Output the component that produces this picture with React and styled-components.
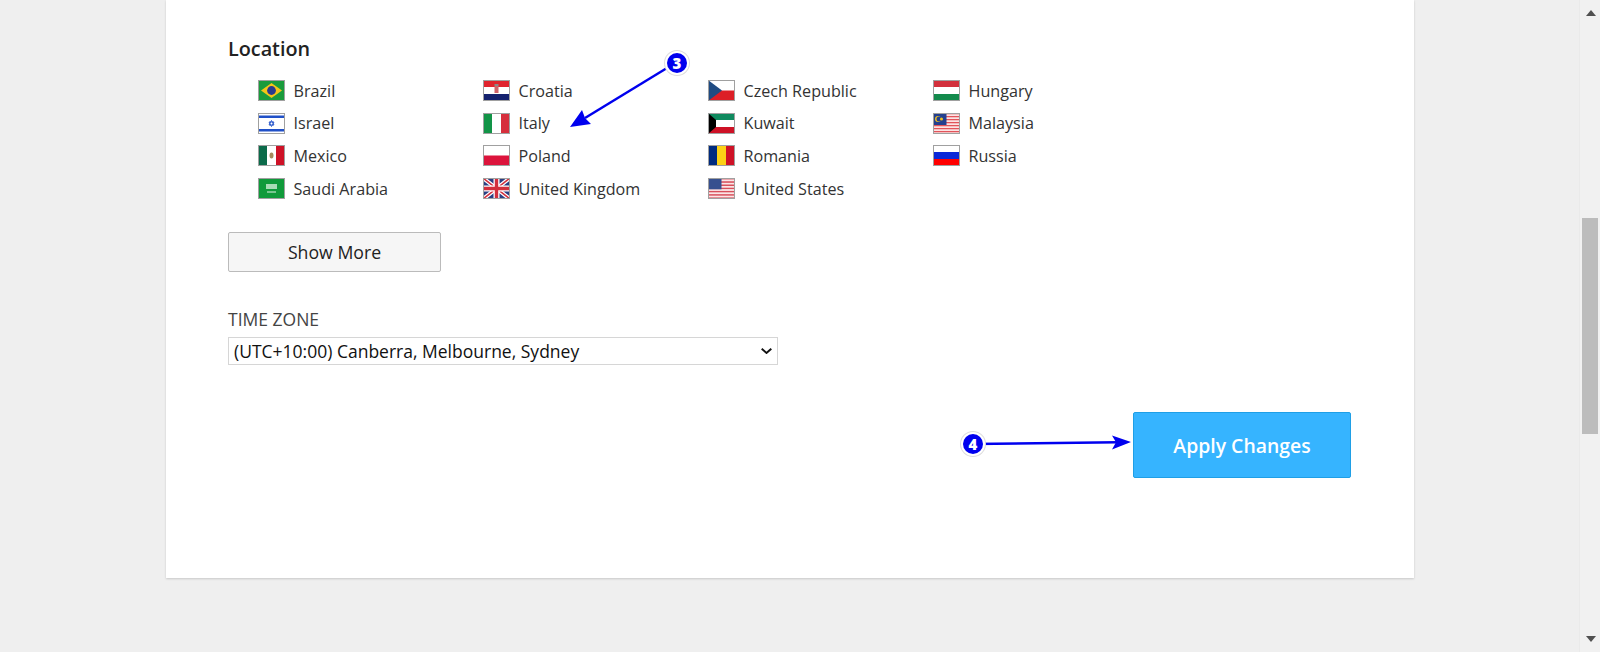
import React from 'react';
import styled, { createGlobalStyle } from 'styled-components';

const Global = createGlobalStyle`
  html, body { margin: 0; padding: 0; height: 100%; overflow: hidden; background: #efefef; }
  body { font-family: "Open Sans", "Liberation Sans", sans-serif; }
`;

const Page = styled.div`
  position: relative;
  display: flex;
  width: 1600px;
  height: 652px;
  overflow: hidden;
  background: #efefef;
`;
const Main = styled.main`
  flex: 1;
  padding-left: 166px;
`;
const Card = styled.section`
  box-sizing: border-box;
  width: 1248px;
  height: 578px;
  padding: 35px 63px 0 62px;
  background: #fff;
  box-shadow: 0 1px 2px rgba(0, 0, 0, 0.16);
`;
const Heading = styled.h2`
  margin: 0;
  font-size: 19.8px;
  line-height: 27px;
  font-weight: 600;
  color: #222;
`;
const FlagGrid = styled.ul`
  display: grid;
  grid-template-columns: repeat(4, 225px);
  grid-auto-rows: 32.6px;
  margin: 12.5px 0 0;
  padding: 0 0 0 30px;
  list-style: none;
`;
const FlagItem = styled.li`
  display: flex;
  align-items: center;
  gap: 8.5px;
  font-size: 16.15px;
  line-height: 22px;
  color: #333;
`;
const FlagSvg = styled.svg`
  flex: none;
  width: 27px;
  height: 21px;
  display: block;
`;
const ShowMore = styled.button`
  display: block;
  box-sizing: border-box;
  width: 213px;
  height: 40px;
  margin-top: 27.5px;
  border: 1px solid #bbb;
  border-radius: 2px;
  background: #f6f6f6;
  font: 400 17.7px "Open Sans", sans-serif;
  color: #222;
`;
const FieldLabel = styled.label`
  display: block;
  margin-top: 35px;
  font-size: 17.5px;
  line-height: 24px;
  color: #444;
`;
const ZoneSelect = styled.select`
  display: block;
  box-sizing: border-box;
  width: 550px;
  height: 28px;
  margin-top: 6px;
  padding: 0 0 0 5px;
  border: 1px solid #d6d6d6;
  border-radius: 0;
  appearance: none;
  background: #fff url("data:image/svg+xml,%3Csvg xmlns='http://www.w3.org/2000/svg' width='11' height='6'%3E%3Cpath d='M.7.7 5.5 5 10.3.7' fill='none' stroke='%23111' stroke-width='1.9'/%3E%3C/svg%3E") no-repeat 532px 10px;
  font: 400 17.5px "Open Sans", sans-serif;
  color: #111;
`;
const ActionRow = styled.div`
  display: flex;
  justify-content: flex-end;
  margin-top: 47px;
`;
const ApplyButton = styled.button`
  box-sizing: border-box;
  width: 218px;
  height: 66px;
  border: 1px solid #1f9fe6;
  border-radius: 2px;
  background: #36b4ff;
  font: 600 19.4px "Open Sans", sans-serif;
  color: #fff;
`;
const Scrollbar = styled.aside`
  position: absolute;
  top: 0;
  right: 0;
  bottom: 0;
  width: 21px;
  box-sizing: border-box;
  padding: 218px 2px 0;
  background: #f1f1f1;
  border-left: 1px solid #eaeaea;
`;
const Thumb = styled.div`
  height: 216px;
  background: #bcbcbc;
`;
const ScrollArrow = styled.svg`
  position: absolute;
  right: 4px;
  width: 10px;
  height: 6px;
  ${p => (p.$up ? 'top: 10px;' : 'bottom: 10px;')}
`;
const Overlay = styled.svg`
  position: absolute;
  inset: 0;
  width: 1600px;
  height: 652px;
  pointer-events: none;
`;
const Badge = styled.span`
  position: absolute;
  left: ${p => p.$x - 10}px;
  top: ${p => p.$y - 10}px;
  box-sizing: border-box;
  width: 20px;
  height: 20px;
  display: flex;
  align-items: center;
  justify-content: center;
  border-radius: 50%;
  background: #0000ee;
  box-shadow: 0 0 0 2px #fff, 0 0 0 3px #ddd;
  font: 800 15px "Open Sans", sans-serif;
  color: #fff;
`;

const stripes = (n, a, b) =>
  Array.from({ length: n }, (_, i) => (
    <rect key={i} x="0" y={(i * 21) / n} width="27" height={21 / n + 0.1} fill={i % 2 ? b : a} />
  ));

const art = {
  br: <><rect width="27" height="21" fill="#1a9b3c" /><path d="M13.5 3 24 10.5 13.5 18 3 10.5Z" fill="#f5c518" /><circle cx="13.5" cy="10.5" r="4.4" fill="#2b3a8c" /></>,
  hr: <><rect width="27" height="7" fill="#e0232e" /><rect y="7" width="27" height="7" fill="#fff" /><rect y="14" width="27" height="7" fill="#14216e" /><rect x="11.5" y="6" width="4" height="7" fill="#d0626a" /><rect x="11.5" y="4" width="4" height="2" fill="#8a8a8a" /></>,
  cz: <><rect width="27" height="10.5" fill="#fff" /><rect y="10.5" width="27" height="10.5" fill="#dc1e26" /><path d="M0 0 14 10.5 0 21Z" fill="#1f4b82" /></>,
  hu: <><rect width="27" height="7" fill="#d2303c" /><rect y="7" width="27" height="7" fill="#fff" /><rect y="14" width="27" height="7" fill="#138a4c" /></>,
  il: <><rect width="27" height="21" fill="#fff" /><rect y="2.5" width="27" height="2.5" fill="#2050c8" /><rect y="16" width="27" height="2.5" fill="#2050c8" /><path d="M13.5 7.5 16 12H11ZM13.5 13.5 11 9h5Z" fill="none" stroke="#2050c8" strokeWidth="0.9" /></>,
  it: <><rect width="9" height="21" fill="#129447" /><rect x="9" width="9" height="21" fill="#fff" /><rect x="18" width="9" height="21" fill="#d62f3c" /></>,
  kw: <><rect width="27" height="7" fill="#0f8a5f" /><rect y="7" width="27" height="7" fill="#fff" /><rect y="14" width="27" height="7" fill="#ce1126" /><path d="M0 0 8 7V14L0 21Z" fill="#000" /></>,
  my: <>{stripes(14, '#e2545a', '#fbe3e3')}<rect width="13.5" height="12" fill="#23408f" /><circle cx="5" cy="6" r="3" fill="#f0c020" /><circle cx="6" cy="6" r="2.5" fill="#23408f" /><circle cx="8.5" cy="6" r="1.5" fill="#f0c020" /></>,
  mx: <><rect width="9" height="21" fill="#0b6b4a" /><rect x="9" width="9" height="21" fill="#fff" /><rect x="18" width="9" height="21" fill="#ce1126" /><ellipse cx="13.5" cy="10.5" rx="2" ry="3" fill="#a58a5c" /></>,
  pl: <><rect width="27" height="10.5" fill="#fff" /><rect y="10.5" width="27" height="10.5" fill="#dc143c" /></>,
  ro: <><rect width="9" height="21" fill="#002b7f" /><rect x="9" width="9" height="21" fill="#fcd116" /><rect x="18" width="9" height="21" fill="#ce1126" /></>,
  ru: <><rect width="27" height="7" fill="#fff" /><rect y="7" width="27" height="7" fill="#0a28d8" /><rect y="14" width="27" height="7" fill="#f00" /></>,
  sa: <><rect width="27" height="21" fill="#109a3a" /><rect x="8" y="6" width="11" height="5" fill="#a9dcb5" /><rect x="9" y="13.5" width="9" height="1" fill="#dff2e3" /></>,
  gb: <><rect width="27" height="21" fill="#2a3f83" /><path d="M0 0 27 21M27 0 0 21" stroke="#fff" strokeWidth="4" /><path d="M0 0 27 21M27 0 0 21" stroke="#d22f3c" strokeWidth="1.5" /><path d="M13.5 0V21M0 10.5H27" stroke="#fff" strokeWidth="6" /><path d="M13.5 0V21M0 10.5H27" stroke="#d22f3c" strokeWidth="3.4" /></>,
  us: <>{stripes(13, '#d8505c', '#fbe6e6')}<rect width="13.5" height="11.3" fill="#37508f" /></>,
};

const Flag = ({ code }) => (
  <FlagSvg viewBox="0 0 27 21" aria-hidden="true">
    {art[code]}
    <rect x="0.5" y="0.5" width="26" height="20" fill="none" stroke="#a0a0a0" />
  </FlagSvg>
);

const locations = [
  ['br', 'Brazil'], ['hr', 'Croatia'], ['cz', 'Czech Republic'], ['hu', 'Hungary'],
  ['il', 'Israel'], ['it', 'Italy'], ['kw', 'Kuwait'], ['my', 'Malaysia'],
  ['mx', 'Mexico'], ['pl', 'Poland'], ['ro', 'Romania'], ['ru', 'Russia'],
  ['sa', 'Saudi Arabia'], ['gb', 'United Kingdom'], ['us', 'United States'],
];

export default function App() {
  return (
    <Page>
      <Global />
      <Main>
        <Card>
          <Heading>Location</Heading>
          <FlagGrid>
            {locations.map(([code, name]) => (
              <FlagItem key={code}><Flag code={code} />{name}</FlagItem>
            ))}
          </FlagGrid>
          <ShowMore type="button">Show More</ShowMore>
          <FieldLabel htmlFor="tz">TIME ZONE</FieldLabel>
          <ZoneSelect id="tz" defaultValue="syd">
            <option value="syd">(UTC+10:00) Canberra, Melbourne, Sydney</option>
          </ZoneSelect>
          <ActionRow>
            <ApplyButton type="button">Apply Changes</ApplyButton>
          </ActionRow>
        </Card>
      </Main>
      <Scrollbar>
        <ScrollArrow $up viewBox="0 0 10 6"><path d="M5 0 10 6H0Z" fill="#505050" /></ScrollArrow>
        <Thumb />
        <ScrollArrow viewBox="0 0 10 6"><path d="M0 0H10L5 6Z" fill="#505050" /></ScrollArrow>
      </Scrollbar>
      <Overlay viewBox="0 0 1600 652">
        <path d="M667 68 585 118" stroke="#0000ee" strokeWidth="2.5" fill="none" />
        <path d="M570 127 582 110 585 118 591 124Z" fill="#0000ee" />
        <path d="M973 444 1118 442.3" stroke="#0000ee" strokeWidth="2.5" fill="none" />
        <path d="M1131 442 1112 435.5 1116 442.3 1112 449.5Z" fill="#0000ee" />
      </Overlay>
      <Badge $x={677} $y={63}>3</Badge>
      <Badge $x={973} $y={444}>4</Badge>
    </Page>
  );
}
